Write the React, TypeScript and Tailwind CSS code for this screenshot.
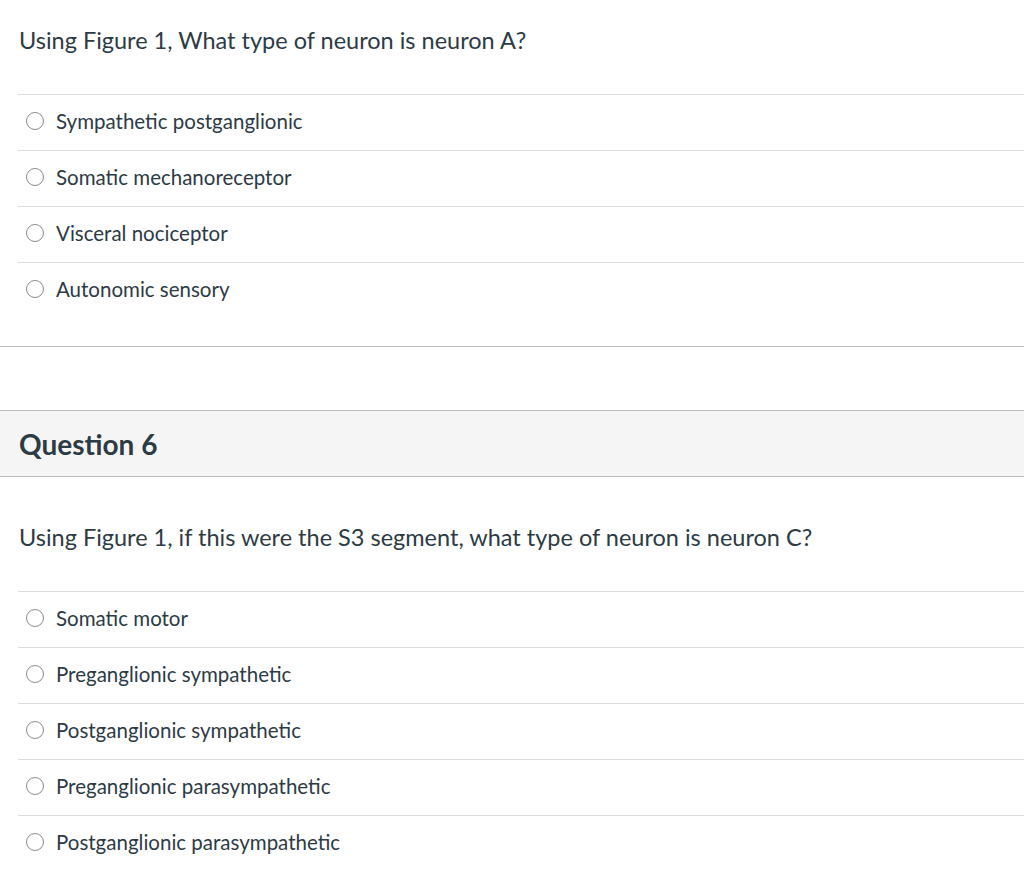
import React from 'react';

const q5 = ['Sympathetic postganglionic', 'Somatic mechanoreceptor', 'Visceral nociceptor', 'Autonomic sensory'];
const q6 = [
  'Somatic motor',
  'Preganglionic sympathetic',
  'Postganglionic sympathetic',
  'Preganglionic parasympathetic',
  'Postganglionic parasympathetic',
];

function Answer({ label }: { label: string }) {
  return (
    <div className="flex h-[56px] items-center border-t border-[#dcdcdc] pl-[8px] pb-[4px]">
      <span className="h-[18px] w-[18px] shrink-0 rounded-full border border-[#8b8b8b] bg-white" />
      <span className="ml-[12px] text-[20.5px] leading-[26px] text-[#2d3b45]">{label}</span>
    </div>
  );
}

export default function App() {
  return (
    <div className="min-h-screen bg-white font-['Lato',sans-serif] text-[#2d3b45]">
      {/* Question 5 body */}
      <div className="pl-[18px]">
        <p className="pt-[25px] pl-[1px] text-[23.5px] leading-[30px]">Using Figure 1, What type of neuron is neuron A?</p>
        <div className="mt-[39px]">
          {q5.map((a) => (
            <Answer key={a} label={a} />
          ))}
        </div>
      </div>
      <div className="mt-[28px] border-t border-[#b8bcbf]" />

      {/* Question 6 */}
      <div className="mt-[63px] flex h-[67px] items-center border-y border-[#b8bcbf] bg-[#f5f5f5] pl-[19px]">
        <h2 className="text-[28px] font-bold leading-none">Question 6</h2>
      </div>
      <div className="pl-[18px]">
        <p className="pt-[45px] pl-[1px] text-[23.5px] leading-[30px]">
          Using Figure 1, if this were the S3 segment, what type of neuron is neuron C?
        </p>
        <div className="mt-[39px]">
          {q6.map((a) => (
            <Answer key={a} label={a} />
          ))}
        </div>
      </div>
    </div>
  );
}
